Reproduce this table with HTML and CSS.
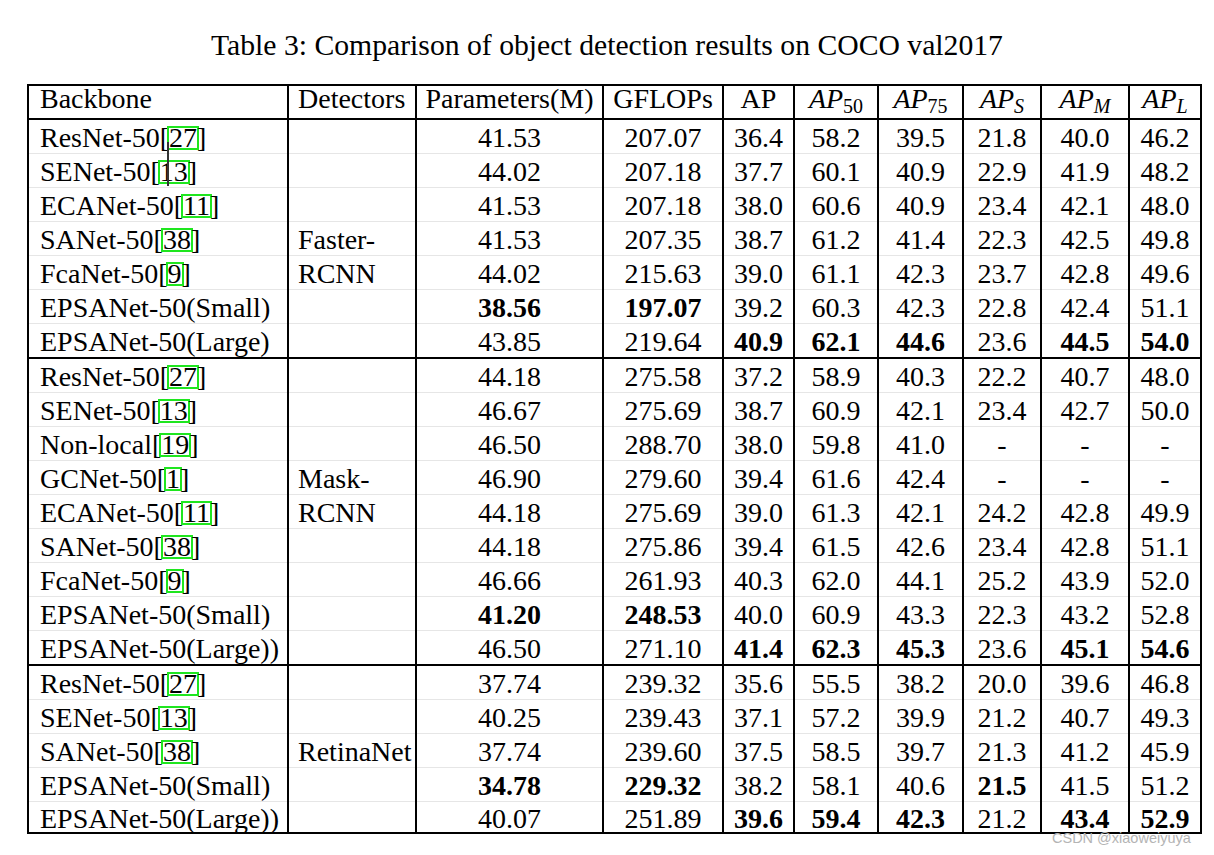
FILE: index.html
```html
<!DOCTYPE html>
<html>
<head>
<meta charset="utf-8">
<link rel="stylesheet" href="styles.css">
</head>
<body>
<div class="page">
  <div class="caption">Table 3: Comparison of object detection results on COCO val2017</div>
  <table class="results">
    <colgroup>
      <col class="c-backbone"><col class="c-det"><col class="c-params"><col class="c-gflops"><col class="c-ap"><col class="c-ap50"><col class="c-ap75"><col class="c-aps"><col class="c-apm"><col class="c-apl">
    </colgroup>
    <thead>
      <tr>
        <th class="left">Backbone</th>
        <th class="left det">Detectors</th>
        <th>Parameters(M)</th>
        <th>GFLOPs</th>
        <th>AP</th>
        <th><i>AP</i><sub>50</sub></th>
        <th><i>AP</i><sub>75</sub></th>
        <th><i>AP</i><sub><i>S</i></sub></th>
        <th><i>AP</i><sub><i>M</i></sub></th>
        <th><i>AP</i><sub><i>L</i></sub></th>
      </tr>
    </thead>
    <tbody>
      <tr><td class="left">ResNet-50[<span class="cite">27</span>]</td><td class="det"></td><td>41.53</td><td>207.07</td><td>36.4</td><td>58.2</td><td>39.5</td><td>21.8</td><td>40.0</td><td>46.2</td></tr>
      <tr><td class="left">SENet-50[<span class="cite">13</span>]</td><td class="det"></td><td>44.02</td><td>207.18</td><td>37.7</td><td>60.1</td><td>40.9</td><td>22.9</td><td>41.9</td><td>48.2</td></tr>
      <tr><td class="left">ECANet-50[<span class="cite">11</span>]</td><td class="det"></td><td>41.53</td><td>207.18</td><td>38.0</td><td>60.6</td><td>40.9</td><td>23.4</td><td>42.1</td><td>48.0</td></tr>
      <tr><td class="left">SANet-50[<span class="cite">38</span>]</td><td class="det">Faster-</td><td>41.53</td><td>207.35</td><td>38.7</td><td>61.2</td><td>41.4</td><td>22.3</td><td>42.5</td><td>49.8</td></tr>
      <tr><td class="left">FcaNet-50[<span class="cite">9</span>]</td><td class="det">RCNN</td><td>44.02</td><td>215.63</td><td>39.0</td><td>61.1</td><td>42.3</td><td>23.7</td><td>42.8</td><td>49.6</td></tr>
      <tr><td class="left">EPSANet-50(Small)</td><td class="det"></td><td><b>38.56</b></td><td><b>197.07</b></td><td>39.2</td><td>60.3</td><td>42.3</td><td>22.8</td><td>42.4</td><td>51.1</td></tr>
      <tr><td class="left">EPSANet-50(Large)</td><td class="det"></td><td>43.85</td><td>219.64</td><td><b>40.9</b></td><td><b>62.1</b></td><td><b>44.6</b></td><td>23.6</td><td><b>44.5</b></td><td><b>54.0</b></td></tr>
    </tbody>
    <tbody>
      <tr><td class="left">ResNet-50[<span class="cite">27</span>]</td><td class="det"></td><td>44.18</td><td>275.58</td><td>37.2</td><td>58.9</td><td>40.3</td><td>22.2</td><td>40.7</td><td>48.0</td></tr>
      <tr><td class="left">SENet-50[<span class="cite">13</span>]</td><td class="det"></td><td>46.67</td><td>275.69</td><td>38.7</td><td>60.9</td><td>42.1</td><td>23.4</td><td>42.7</td><td>50.0</td></tr>
      <tr><td class="left">Non-local[<span class="cite">19</span>]</td><td class="det"></td><td>46.50</td><td>288.70</td><td>38.0</td><td>59.8</td><td>41.0</td><td>-</td><td>-</td><td>-</td></tr>
      <tr><td class="left">GCNet-50[<span class="cite">1</span>]</td><td class="det">Mask-</td><td>46.90</td><td>279.60</td><td>39.4</td><td>61.6</td><td>42.4</td><td>-</td><td>-</td><td>-</td></tr>
      <tr><td class="left">ECANet-50[<span class="cite">11</span>]</td><td class="det">RCNN</td><td>44.18</td><td>275.69</td><td>39.0</td><td>61.3</td><td>42.1</td><td>24.2</td><td>42.8</td><td>49.9</td></tr>
      <tr><td class="left">SANet-50[<span class="cite">38</span>]</td><td class="det"></td><td>44.18</td><td>275.86</td><td>39.4</td><td>61.5</td><td>42.6</td><td>23.4</td><td>42.8</td><td>51.1</td></tr>
      <tr><td class="left">FcaNet-50[<span class="cite">9</span>]</td><td class="det"></td><td>46.66</td><td>261.93</td><td>40.3</td><td>62.0</td><td>44.1</td><td>25.2</td><td>43.9</td><td>52.0</td></tr>
      <tr><td class="left">EPSANet-50(Small)</td><td class="det"></td><td><b>41.20</b></td><td><b>248.53</b></td><td>40.0</td><td>60.9</td><td>43.3</td><td>22.3</td><td>43.2</td><td>52.8</td></tr>
      <tr><td class="left">EPSANet-50(Large))</td><td class="det"></td><td>46.50</td><td>271.10</td><td><b>41.4</b></td><td><b>62.3</b></td><td><b>45.3</b></td><td>23.6</td><td><b>45.1</b></td><td><b>54.6</b></td></tr>
    </tbody>
    <tbody>
      <tr><td class="left">ResNet-50[<span class="cite">27</span>]</td><td class="det"></td><td>37.74</td><td>239.32</td><td>35.6</td><td>55.5</td><td>38.2</td><td>20.0</td><td>39.6</td><td>46.8</td></tr>
      <tr><td class="left">SENet-50[<span class="cite">13</span>]</td><td class="det"></td><td>40.25</td><td>239.43</td><td>37.1</td><td>57.2</td><td>39.9</td><td>21.2</td><td>40.7</td><td>49.3</td></tr>
      <tr><td class="left">SANet-50[<span class="cite">38</span>]</td><td class="det">RetinaNet</td><td>37.74</td><td>239.60</td><td>37.5</td><td>58.5</td><td>39.7</td><td>21.3</td><td>41.2</td><td>45.9</td></tr>
      <tr><td class="left">EPSANet-50(Small)</td><td class="det"></td><td><b>34.78</b></td><td><b>229.32</b></td><td>38.2</td><td>58.1</td><td>40.6</td><td><b>21.5</b></td><td>41.5</td><td>51.2</td></tr>
      <tr class="last-row"><td class="left">EPSANet-50(Large))</td><td class="det"></td><td>40.07</td><td>251.89</td><td><b>39.6</b></td><td><b>59.4</b></td><td><b>42.3</b></td><td>21.2</td><td><b>43.4</b></td><td><b>52.9</b></td></tr>
    </tbody>
  </table>
  <div class="cursor"></div>
  <div class="watermark">CSDN @xiaoweiyuya</div>
</div>
</body>
</html>
```

FILE: styles.css
```css
html, body {
  margin: 0;
  padding: 0;
  background: #ffffff;
}

.page {
  position: relative;
  width: 1214px;
  height: 855px;
  font-family: "Liberation Serif", "Times New Roman", serif;
  color: #000;
}

.caption {
  padding-top: 28px;
  height: 34px;
  line-height: 34px;
  font-size: 29.7px;
  text-align: center;
}

.results {
  margin: 22px 0 0 27px;
  border-collapse: collapse;
  table-layout: fixed;
  width: 1175px;
  border: 2px solid #000;
  font-size: 28px;
}

.c-backbone { width: 260px; }
.c-det { width: 128px; }
.c-params { width: 187px; }
.c-gflops { width: 120px; }
.c-ap { width: 71px; }
.c-ap50 { width: 84px; }
.c-ap75 { width: 85px; }
.c-aps { width: 78px; }
.c-apm { width: 88px; }
.c-apl { width: 72px; }

.results th,
.results td {
  border-left: 2px solid #000;
  border-right: 2px solid #000;
  border-bottom: 1px solid #e6e6e6;
  padding: 3px 0 0;
  line-height: 30px;
  height: 33px;
  box-sizing: border-box;
  text-align: center;
  white-space: nowrap;
  font-weight: normal;
  vertical-align: top;
}

.results thead th {
  border-bottom: 2px solid #000;
  height: 34px;
  padding-top: 0;
  line-height: 25px;
}

.results .last-row td {
  height: 30px;
  line-height: 27px;
  padding-top: 3px;
}

.results tbody + tbody tr:first-child td {
  border-top: 2px solid #000;
}

.results .left {
  text-align: left;
  padding-left: 11px;
}

.results .det {
  text-align: left;
  padding-left: 9px;
}

.results b {
  font-weight: bold;
}

.results sub {
  font-size: 20px;
  vertical-align: -5px;
  line-height: 0;
  font-style: normal;
}

.results i {
  font-style: italic;
}

.cite {
  display: inline-block;
  line-height: 20px;
  outline: 2px solid #1fe61f;
  outline-offset: 0;
}

.cursor {
  position: absolute;
  left: 167px;
  top: 142px;
  width: 2px;
  height: 44px;
  background: #333;
}

.watermark {
  position: absolute;
  left: 1052px;
  top: 832px;
  font-family: "Liberation Sans", Arial, sans-serif;
  font-size: 14.5px;
  line-height: 12px;
  color: #b4b4b4;
}
```
